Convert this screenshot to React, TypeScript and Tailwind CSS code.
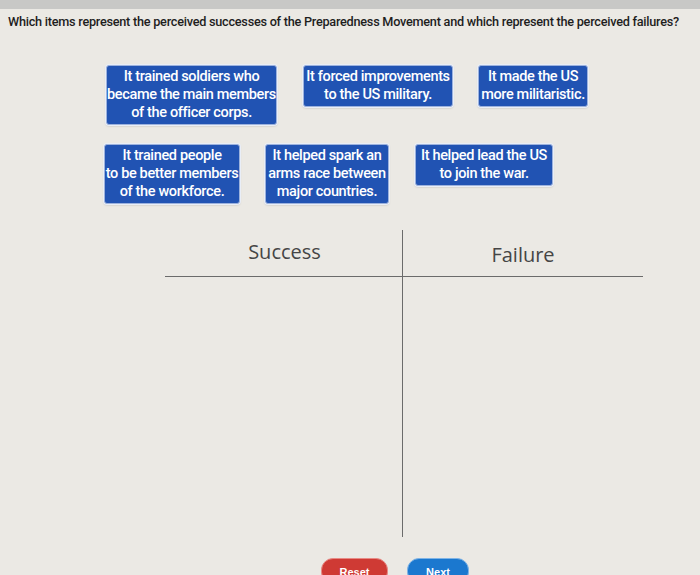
import React from "react";

const Card = ({ lines, w, cls = "" }: { lines: string[]; w: string; cls?: string }) => (
  <div
    className={`${w} ${cls} rounded-[3px] bg-[#2153b3] border border-[#9db2dc] shadow-[0_0_0_1px_#e9eef7,0_1px_2px_rgba(0,0,0,0.25)] py-[2px] text-center text-white text-[14.5px] leading-[18px] font-medium tracking-[-0.35px]`}
    style={{ fontFamily: 'Roboto, "Liberation Sans", Arial, sans-serif' }}
  >
    {lines.map((l, i) => (
      <div key={i} className="whitespace-nowrap">{l}</div>
    ))}
  </div>
);

export default function App() {
  return (
    <div
      className="w-[700px] h-[575px] overflow-hidden bg-[#ebe9e4] flex flex-col"
      style={{ fontFamily: '"Liberation Sans", Arial, sans-serif' }}
    >
      <div className="h-[9px] bg-[#c8c8c6] shrink-0" />
      <div
        className="pl-[8px] pt-[5px] text-[12.7px] leading-[16px] text-[#1e1e1e] font-medium tracking-[-0.25px] whitespace-nowrap"
        style={{ fontFamily: 'Roboto, "Liberation Sans", Arial, sans-serif' }}
      >
        Which items represent the perceived successes of the Preparedness Movement and which represent the perceived failures?
      </div>

      <div className="flex items-start mt-[35px] ml-[106px]">
        <Card w="w-[171px]" lines={["It trained soldiers who", "became the main members", "of the officer corps."]} />
        <Card w="w-[150px]" cls="ml-[26px]" lines={["It forced improvements", "to the US military."]} />
        <Card w="w-[110px]" cls="ml-[25px]" lines={["It made the US", "more militaristic."]} />
      </div>

      <div className="flex items-start mt-[19px] ml-[104px]">
        <Card w="w-[136px]" lines={["It trained people", "to be better members", "of the workforce."]} />
        <Card w="w-[124px]" cls="ml-[25px]" lines={["It helped spark an", "arms race between", "major countries."]} />
        <Card w="w-[138px]" cls="ml-[26px]" lines={["It helped lead the US", "to join the war."]} />
      </div>

      <div
        className="ml-[165px] mt-[26px] w-[478px] grid grid-cols-[237px_241px] grid-rows-[47px_260px] text-[#454545]"
        style={{ fontFamily: '"Open Sans", "Noto Sans", sans-serif' }}
      >
        <div className="border-b-[1.5px] border-[#6b6b6b] flex items-center justify-center pl-[2px] pb-[3px] text-[20px]">
          Success
        </div>
        <div className="border-b-[1.5px] border-l-[1.5px] border-[#6b6b6b] flex items-center justify-center pt-[3px] text-[20px]">
          Failure
        </div>
        <div />
        <div className="border-l-[1.5px] border-[#6b6b6b]" />
      </div>

      <div className="flex ml-[321px] mt-[21px] gap-[19px]">
        <div className="w-[67px] h-[26px] rounded-[12px] bg-[#cf3a34] border border-[#e88a85] text-white text-[11px] font-bold text-center pt-[5px]">
          Reset
        </div>
        <div className="w-[62px] h-[26px] rounded-[12px] bg-[#1b78cf] border border-[#7fb4e6] text-white text-[11px] font-bold text-center pt-[5px]">
          Next
        </div>
      </div>
    </div>
  );
}
